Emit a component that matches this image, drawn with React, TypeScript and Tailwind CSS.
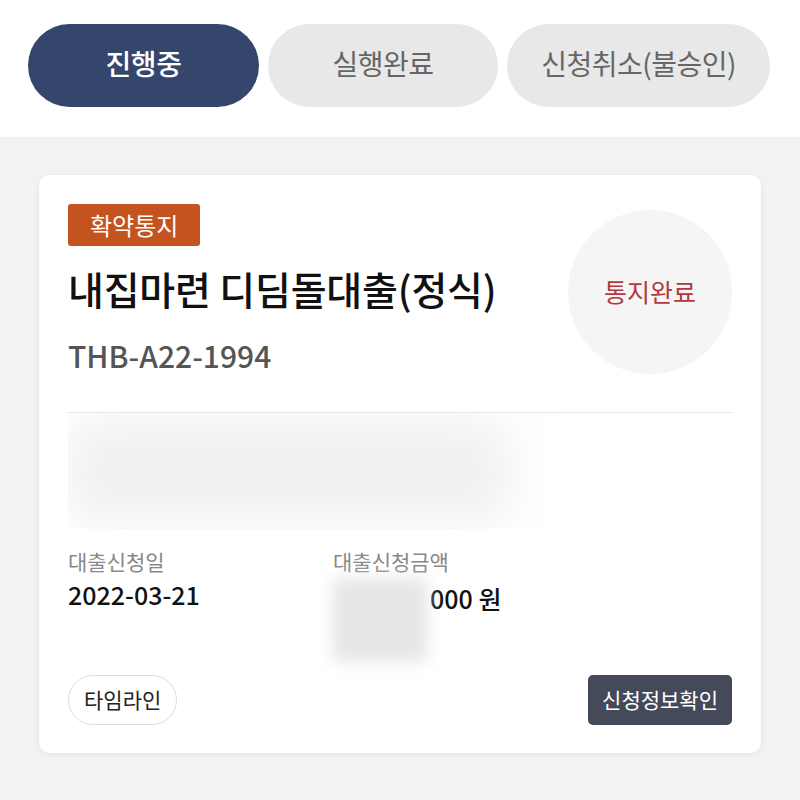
import React from 'react';

const font = { fontFamily: '"Noto Sans CJK KR", "Noto Sans", sans-serif' };

const tabs = [
  { label: '진행중', active: true, w: 'w-[231px]' },
  { label: '실행완료', active: false, w: 'w-[230px]' },
  { label: '신청취소(불승인)', active: false, w: 'w-[263px]' },
];

export default function App() {
  return (
    <div className="w-[800px] h-[800px] bg-[#f2f2f2] flex flex-col overflow-hidden" style={font}>
      {/* Tabs */}
      <div className="bg-white h-[137px] flex items-start pt-[24px] pl-[28px] gap-[9px]">
        {tabs.map((tab) => (
          <button
            key={tab.label}
            className={`${tab.w} h-[83px] pb-[5px] rounded-full flex items-center justify-center text-[28px] tracking-[-0.5px] ${
              tab.active ? 'bg-[#34466b] text-white font-medium' : 'bg-[#e8e8e8] text-[#666666]'
            }`}
          >
            {tab.label}
          </button>
        ))}
      </div>

      {/* Card */}
      <div className="pt-[38px] px-[39px]">
        <div className="bg-white rounded-[10px] shadow-[0_1px_4px_rgba(0,0,0,0.08)] h-[578px] px-[29px] pt-[29px] flex flex-col">
          <div className="flex items-start justify-between">
            <div className="flex flex-col">
              <span className="self-start bg-[#c4531f] text-white text-[24px] leading-[42px] h-[42px] px-[22px] rounded-[3px]">
                확약통지
              </span>
              <h2 className="mt-[18px] text-[39px] leading-[48px] font-medium text-[#111111] tracking-[-0.2px]">
                내집마련 디딤돌대출(정식)
              </h2>
              <p className="mt-[25px] text-[30px] leading-[36px] font-medium text-[#555555]">THB-A22-1994</p>
            </div>
            <div className="mt-[6px] w-[164px] h-[164px] rounded-full bg-[#f5f5f5] flex items-center justify-center text-[25px] text-[#b0393e]">
              통지완료
            </div>
          </div>

          <div className="mt-[38px] border-t border-[#e8e8e8]" />

          {/* blurred content */}
          <div className="h-[116px] relative overflow-hidden">
            <div className="absolute left-[0px] top-[8px] w-[440px] h-[100px] bg-[#ececec] blur-xl opacity-80" />
          </div>

          <div className="mt-[18px] grid grid-cols-[265px_1fr]">
            <div>
              <p className="text-[21px] leading-[28px] text-[#888888]">대출신청일</p>
              <p className="mt-[2px] text-[25px] leading-[34px] font-medium text-[#111111]">2022-03-21</p>
            </div>
            <div>
              <p className="text-[21px] leading-[28px] text-[#888888]">대출신청금액</p>
              <div className="flex items-start -ml-[3px]">
                <div className="w-[100px] h-[90px] relative">
                  <div className="absolute inset-[3px] bg-[#e6e6e6] blur-sm" />
                </div>
                <p className="mt-[6px] text-[25px] leading-[34px] font-medium text-[#111111]">000 원</p>
              </div>
            </div>
          </div>

          <div className="mt-auto mb-[28px] flex items-center justify-between">
            <button className="h-[50px] px-[15px] rounded-full border border-[#dddddd] text-[21px] text-[#222222]">
              타임라인
            </button>
            <button className="h-[50px] px-[14px] rounded-[5px] bg-[#454a5a] text-[21px] text-white">
              신청정보확인
            </button>
          </div>
        </div>
      </div>
    </div>
  );
}
